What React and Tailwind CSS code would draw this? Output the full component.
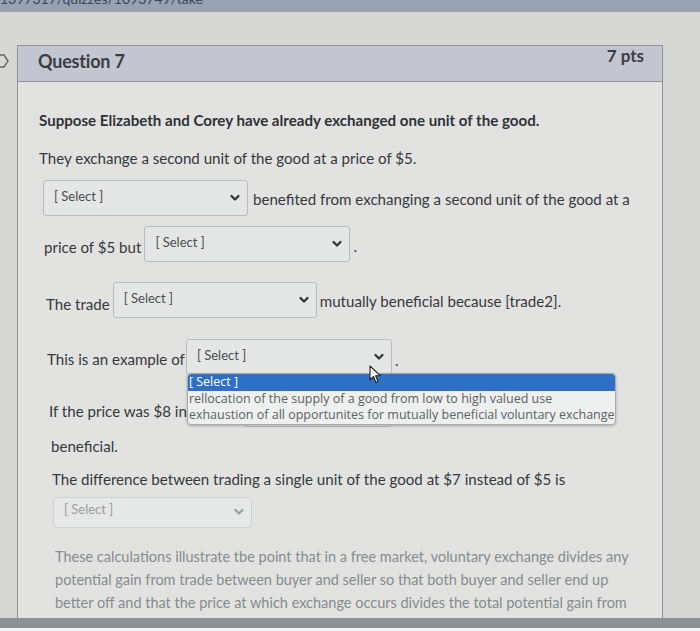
import React from "react";

function Chevron({ color = "#333" }) {
  return (
    <svg width="10" height="8" viewBox="0 0 10 8" className="shrink-0">
      <path d="M1.5 2 L5 5.5 L8.5 2" fill="none" stroke={color} strokeWidth="2.2" strokeLinecap="round" strokeLinejoin="round" />
    </svg>
  );
}

function Sel({ w, h = 36, faded = false }) {
  return (
    <div
      className={`flex items-center justify-between pl-[10px] pr-[7px] border rounded-[3px] shrink-0 ${faded ? "border-[#cfd2d1] bg-[#e6e8e7]" : "border-[#b9bcbd] bg-[#e4e7e6]"}`}
      style={{ width: w, height: h }}
    >
      <span className={`text-[13px] -mt-[4px] ${faded ? "text-[#9a9d9f]" : "text-[#4a4d50]"}`}>[ Select ]</span>
      <Chevron color={faded ? "#9aa0a0" : "#333"} />
    </div>
  );
}

export default function App() {
  return (
    <div className="relative w-[700px] h-[631px] overflow-hidden bg-[#d7d8d5] text-[#35393c]" style={{ fontFamily: "Lato, 'Open Sans', sans-serif" }}>
      {/* top browser strip */}
      <div className="h-[12px] bg-[#98a2b2] overflow-hidden relative">
        <div className="absolute left-[0px] -top-[12px] text-[14px] text-[#3d4552]">1397317/quizzes/1093749/take</div>
      </div>

      {/* left partial icon */}
      <svg className="absolute left-[-6px] top-[53px]" width="16" height="16" viewBox="0 0 16 16">
        <path d="M2 2 L10 2 L14 8 L10 14 L2 14" fill="none" stroke="#666" strokeWidth="1.4" />
      </svg>

      <div className="mt-[33px] ml-[17px] w-[646px] border border-[#8f9297] bg-[#e2e3e1]">
        {/* header */}
        <div className="h-[36px] bg-[#c3c6d0] border-b border-[#8f9297] flex items-start justify-between pl-[20px] pr-[18px]">
          <span className="text-[18px] font-bold text-[#3a3d44] tracking-[-0.2px] mt-[2px]">Question 7</span>
          <span className="text-[17px] font-bold text-[#3a3d44] -mt-[3px]">7 pts</span>
        </div>

        {/* body */}
        <div className="relative pb-[20px] text-[15.1px]">
          <p className="pl-[21px] pt-[27px] font-bold text-[#2f3236]">Suppose Elizabeth and Corey have already exchanged one unit of the good.</p>
          <p className="pl-[21px] mt-[15px]">They exchange a second unit of the good at a price of $5.</p>

          <div className="pl-[25px] mt-[11px] flex items-center gap-[5px]">
            <Sel w={205} />
            <span className="pt-[2px]">benefited from exchanging a second unit of the good at a</span>
          </div>

          <div className="pl-[26px] mt-[10px] flex items-center gap-[3px]">
            <span className="pt-[6px]">price of $5 but</span>
            <Sel w={206} />
            <span className="pt-[4px]">.</span>
          </div>

          <div className="pl-[28px] mt-[20px] flex items-center gap-[3px]">
            <span className="pt-[8px]">The trade</span>
            <Sel w={204} />
            <span className="pt-[2px]">mutually beneficial because [trade2].</span>
          </div>

          <div className="relative z-10 pl-[29px] mt-[21px] flex items-center gap-[1px]">
            <span className="pt-[5px]">This is an example of</span>
            <div className="relative">
              <Sel w={206} />
              {/* open dropdown list */}
              <div
                className="absolute left-[1px] top-[34px] w-[429px] bg-[#eef0ef] border border-[#a9adb0] rounded-[4px] shadow-[0_1px_3px_rgba(0,0,0,0.25)] overflow-hidden text-[12.5px] leading-[16px] text-[#5b6066]"
                style={{ fontFamily: "'Open Sans', 'DejaVu Sans', sans-serif" }}
              >
                <div className="bg-[#2f6fc6] text-white pl-[1px] h-[17px] rounded-t-[3px]">[ Select ]</div>
                <div className="pl-[1px]">rellocation of the supply of a good from low to high valued use</div>
                <div className="pl-[1px] pb-[1px]">exhaustion of all opportunites for mutually beneficial voluntary exchange</div>
              </div>
              {/* cursor */}
              <svg className="absolute left-[183px] top-[26px]" width="14" height="20" viewBox="0 0 14 20">
                <path d="M1 1 L1 15 L4.5 11.5 L7 17.5 L9 16.5 L6.6 10.8 L11.5 10.8 Z" fill="#fff" stroke="#222" strokeWidth="1.1" strokeLinejoin="round" />
              </svg>
            </div>
            <span className="pt-[6px] pl-[2px]">.</span>
          </div>

          <div className="pl-[31px] mt-[20px] flex items-center gap-[4px]">
            <span>If the price was $8 instead of</span>
            <Sel w={148} h={32} />
          </div>

          <p className="pl-[33px] mt-[8px]">beneficial.</p>
          <p className="pl-[34px] mt-[10px]">The difference between trading a single unit of the good at $7 instead of $5 is</p>
          <div className="pl-[35px] mt-[6px]">
            <Sel w={199} h={31} faded />
          </div>

          <div className="ml-[37px] w-[590px] mt-[17px] text-[#858b8e] leading-[23px] text-[14.5px]">
            These calculations illustrate tbe point that in a free market, voluntary exchange divides any potential gain from trade between buyer and seller so that both buyer and seller end up better off and that the price at which exchange occurs divides the total potential gain from trade between buyer and seller.
          </div>
        </div>
      </div>

      {/* bottom screen edge */}
      <div className="absolute left-0 right-0 top-[618px] h-[10px] bg-[#8e9296]" />
      <div className="absolute left-0 right-0 top-[628px] h-[3px] bg-[#f4f4f4]" />
    </div>
  );
}
